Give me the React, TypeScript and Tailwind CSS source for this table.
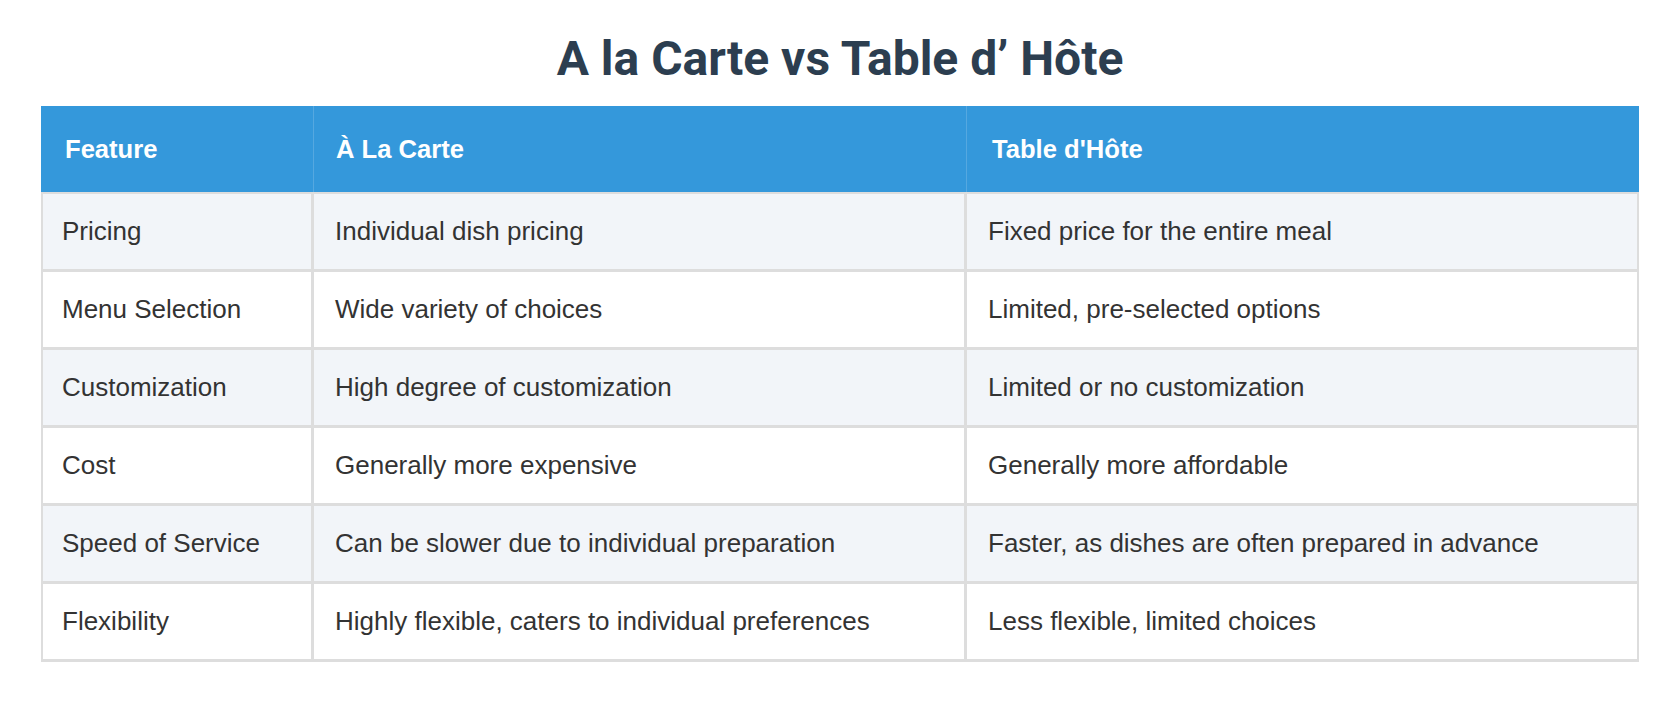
import React from "react";

const rows: [string, string, string][] = [
  ["Pricing", "Individual dish pricing", "Fixed price for the entire meal"],
  ["Menu Selection", "Wide variety of choices", "Limited, pre-selected options"],
  ["Customization", "High degree of customization", "Limited or no customization"],
  ["Cost", "Generally more expensive", "Generally more affordable"],
  [
    "Speed of Service",
    "Can be slower due to individual preparation",
    "Faster, as dishes are often prepared in advance",
  ],
  [
    "Flexibility",
    "Highly flexible, caters to individual preferences",
    "Less flexible, limited choices",
  ],
];

const App: React.FC = () => {
  return (
    <div className="min-h-[704px] bg-white px-[41px] pt-[30px] font-['Liberation_Sans',Arial,sans-serif]">
      <h1 className="mb-[19px] text-center font-['Roboto',sans-serif] text-[48px] font-bold leading-[normal] text-[#2c3e50]">
        A la Carte vs Table d’ Hôte
      </h1>

      <div className="grid grid-cols-[273px_653px_1fr] text-[26px] text-[#333333]">
        {/* header */}
        <div className="flex h-[86px] items-center border-r border-[#55a8e0] bg-[#3498db] pl-[24px] text-[25.6px] font-bold text-white">
          Feature
        </div>
        <div className="flex h-[86px] items-center border-r border-[#55a8e0] bg-[#3498db] pl-[22px] text-[25.6px] font-bold text-white">
          À La Carte
        </div>
        <div className="flex h-[86px] items-center bg-[#3498db] pl-[25px] text-[25.6px] font-bold text-white">
          Table d'Hôte
        </div>

        {/* body */}
        {rows.map((row, i) => {
          const bg = i % 2 === 0 ? "bg-[#f2f5f9]" : "bg-white";
          const top = i === 0 ? "h-[80px] border-t-[2px]" : "h-[78px]";
          return (
            <React.Fragment key={row[0]}>
              <div
                className={`flex items-center border-b-[3px] border-l-[2px] border-r-[3px] border-[#dddddd] pl-[19px] ${top} ${bg}`}
              >
                {row[0]}
              </div>
              <div
                className={`flex items-center border-b-[3px] border-r-[3px] border-[#dddddd] pl-[21px] ${top} ${bg}`}
              >
                {row[1]}
              </div>
              <div
                className={`flex items-center border-b-[3px] border-r-[2px] border-[#dddddd] pl-[21px] ${top} ${bg}`}
              >
                {row[2]}
              </div>
            </React.Fragment>
          );
        })}
      </div>
    </div>
  );
};

export default App;
